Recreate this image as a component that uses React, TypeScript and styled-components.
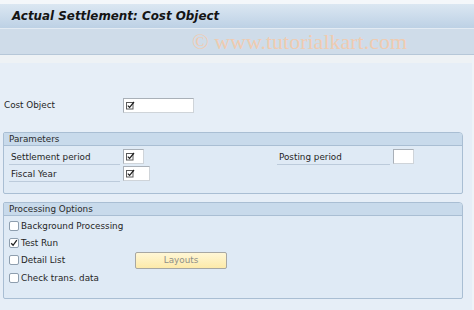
import React from "react";
import styled, { createGlobalStyle } from "styled-components";

const GlobalStyle = createGlobalStyle`
  html, body {
    margin: 0;
    padding: 0;
    background: #ffffff;
  }
  * {
    box-sizing: border-box;
  }
`;

const Page = styled.div`
  width: 474px;
  height: 310px;
  display: flex;
  flex-direction: column;
  background: #f3f6f9;
  font-family: "DejaVu Sans", "Liberation Sans", sans-serif;
  font-size: 8.8px;
  color: #1f1f1f;
  overflow: hidden;
`;

const TopStrip = styled.div`
  height: 4px;
  background: #f4f7fa;
`;

const TitleBar = styled.div`
  height: 25px;
  display: flex;
  align-items: center;
  padding-left: 12px;
  background: linear-gradient(#dbe7f2, #bdd1e5);
  border-bottom: 1px solid #e3ebf3;
  font-size: 11.9px;
  font-weight: bold;
  font-style: italic;
  color: #141414;
`;

const Toolbar = styled.div`
  height: 26px;
  display: flex;
  align-items: center;
  padding-left: 192px;
  background: #cfdce9;
  border-bottom: 1px solid #b6c7d8;
`;

const Watermark = styled.span`
  font-family: "Liberation Serif", serif;
  font-size: 22px;
  color: #efcbb0;
`;

const Content = styled.div`
  flex: 1;
  padding: 42px 9px 0 3px;
  background: linear-gradient(#eef2f5 0, #eef2f5 8px, #e6eef7 8px);
  border-right: 2px solid #eef3f8;
  display: flex;
  flex-direction: column;
`;

const FieldRow = styled.div`
  display: flex;
  align-items: center;
  height: 16px;
`;

const PlainLabel = styled.span`
  width: 120px;
  padding-left: 1px;
`;

const Input = styled.div<{ $w: number }>`
  width: ${(p) => p.$w}px;
  height: 15px;
  background: #ffffff;
  border: 1px solid #a9b0b8;
  border-bottom-color: #cfd4d9;
  border-right-color: #cfd4d9;
  display: flex;
  align-items: center;
  padding-left: 2px;
`;

const Group = styled.div<{ $mt: number; $h: number }>`
  margin-top: ${(p) => p.$mt}px;
  height: ${(p) => p.$h}px;
  border: 1px solid #a9bed3;
  border-radius: 2px 4px 2px 2px;
  background: #dfeaf5;
  display: flex;
  flex-direction: column;
`;

const GroupHeader = styled.div`
  height: 13px;
  display: flex;
  align-items: center;
  padding-left: 5px;
  background: #c8daeb;
  border-bottom: 1px solid #a9bed3;
  border-radius: 1px 3px 0 0;
  color: #2a2a2a;
`;

const ParamGrid = styled.div`
  display: grid;
  grid-template-columns: 114px 154px 116px 21px;
  grid-auto-rows: 17px;
  padding: 3px 0 0 5px;
  align-items: start;
`;

const LineLabel = styled.span`
  height: 16px;
  display: flex;
  align-items: center;
  padding-left: 2px;
  border-bottom: 1px solid #bccbdb;
  margin-right: 3px;
`;

const Spacer = styled.span``;

const OptionsGrid = styled.div`
  display: grid;
  grid-template-columns: 126px 92px;
  grid-auto-rows: 17.3px;
  padding: 1px 0 0 5px;
  align-items: center;
`;

const CheckRow = styled.label`
  display: flex;
  align-items: center;
  gap: 2px;
`;

const Box = styled.span`
  width: 10px;
  height: 10px;
  background: #ffffff;
  border: 1px solid #8e9eae;
  border-radius: 2px;
  display: flex;
  align-items: center;
  justify-content: center;
`;

const LayoutButton = styled.button`
  width: 92px;
  height: 17px;
  padding: 0;
  border: 1px solid #a7a7a2;
  border-radius: 2px;
  background: linear-gradient(#fff7d6, #fdeaa9);
  font-family: "DejaVu Sans", "Liberation Sans", sans-serif;
  font-size: 8.8px;
  color: #8f8f88;
`;

const SelectIcon = () => (
  <svg width="9" height="9" viewBox="0 0 9 9">
    <rect x="0.5" y="1.5" width="6.5" height="6.5" fill="#fff" stroke="#5a5a5a" />
    <path d="M1.8 4.6 L3.6 6.4 L8 1" fill="none" stroke="#1e1e1e" strokeWidth="1.2" />
  </svg>
);

const Tick = () => (
  <svg width="8" height="8" viewBox="0 0 8 8">
    <path d="M1.2 4.2 L3.1 6.3 L6.8 1.2" fill="none" stroke="#222" strokeWidth="1.3" />
  </svg>
);

function Check({ label, checked }: { label: string; checked?: boolean }) {
  return (
    <CheckRow>
      <Box>{checked && <Tick />}</Box>
      {label}
    </CheckRow>
  );
}

export default function App() {
  return (
    <>
      <GlobalStyle />
      <Page>
        <TopStrip />
        <TitleBar>Actual Settlement: Cost Object</TitleBar>
        <Toolbar>
          <Watermark>© www.tutorialkart.com</Watermark>
        </Toolbar>
        <Content>
          <FieldRow>
            <PlainLabel>Cost Object</PlainLabel>
            <Input $w={71}>
              <SelectIcon />
            </Input>
          </FieldRow>

          <Group $mt={19} $h={62}>
            <GroupHeader>Parameters</GroupHeader>
            <ParamGrid>
              <LineLabel>Settlement period</LineLabel>
              <Spacer>
                <Input $w={21}>
                  <SelectIcon />
                </Input>
              </Spacer>
              <LineLabel>Posting period</LineLabel>
              <Input $w={21} />
              <LineLabel>Fiscal Year</LineLabel>
              <Spacer>
                <Input $w={27}>
                  <SelectIcon />
                </Input>
              </Spacer>
            </ParamGrid>
          </Group>

          <Group $mt={8} $h={97}>
            <GroupHeader>Processing Options</GroupHeader>
            <OptionsGrid>
              <Check label="Background Processing" />
              <Spacer />
              <Check label="Test Run" checked />
              <Spacer />
              <Check label="Detail List" />
              <LayoutButton>Layouts</LayoutButton>
              <Check label="Check trans. data" />
              <Spacer />
            </OptionsGrid>
          </Group>
        </Content>
      </Page>
    </>
  );
}
